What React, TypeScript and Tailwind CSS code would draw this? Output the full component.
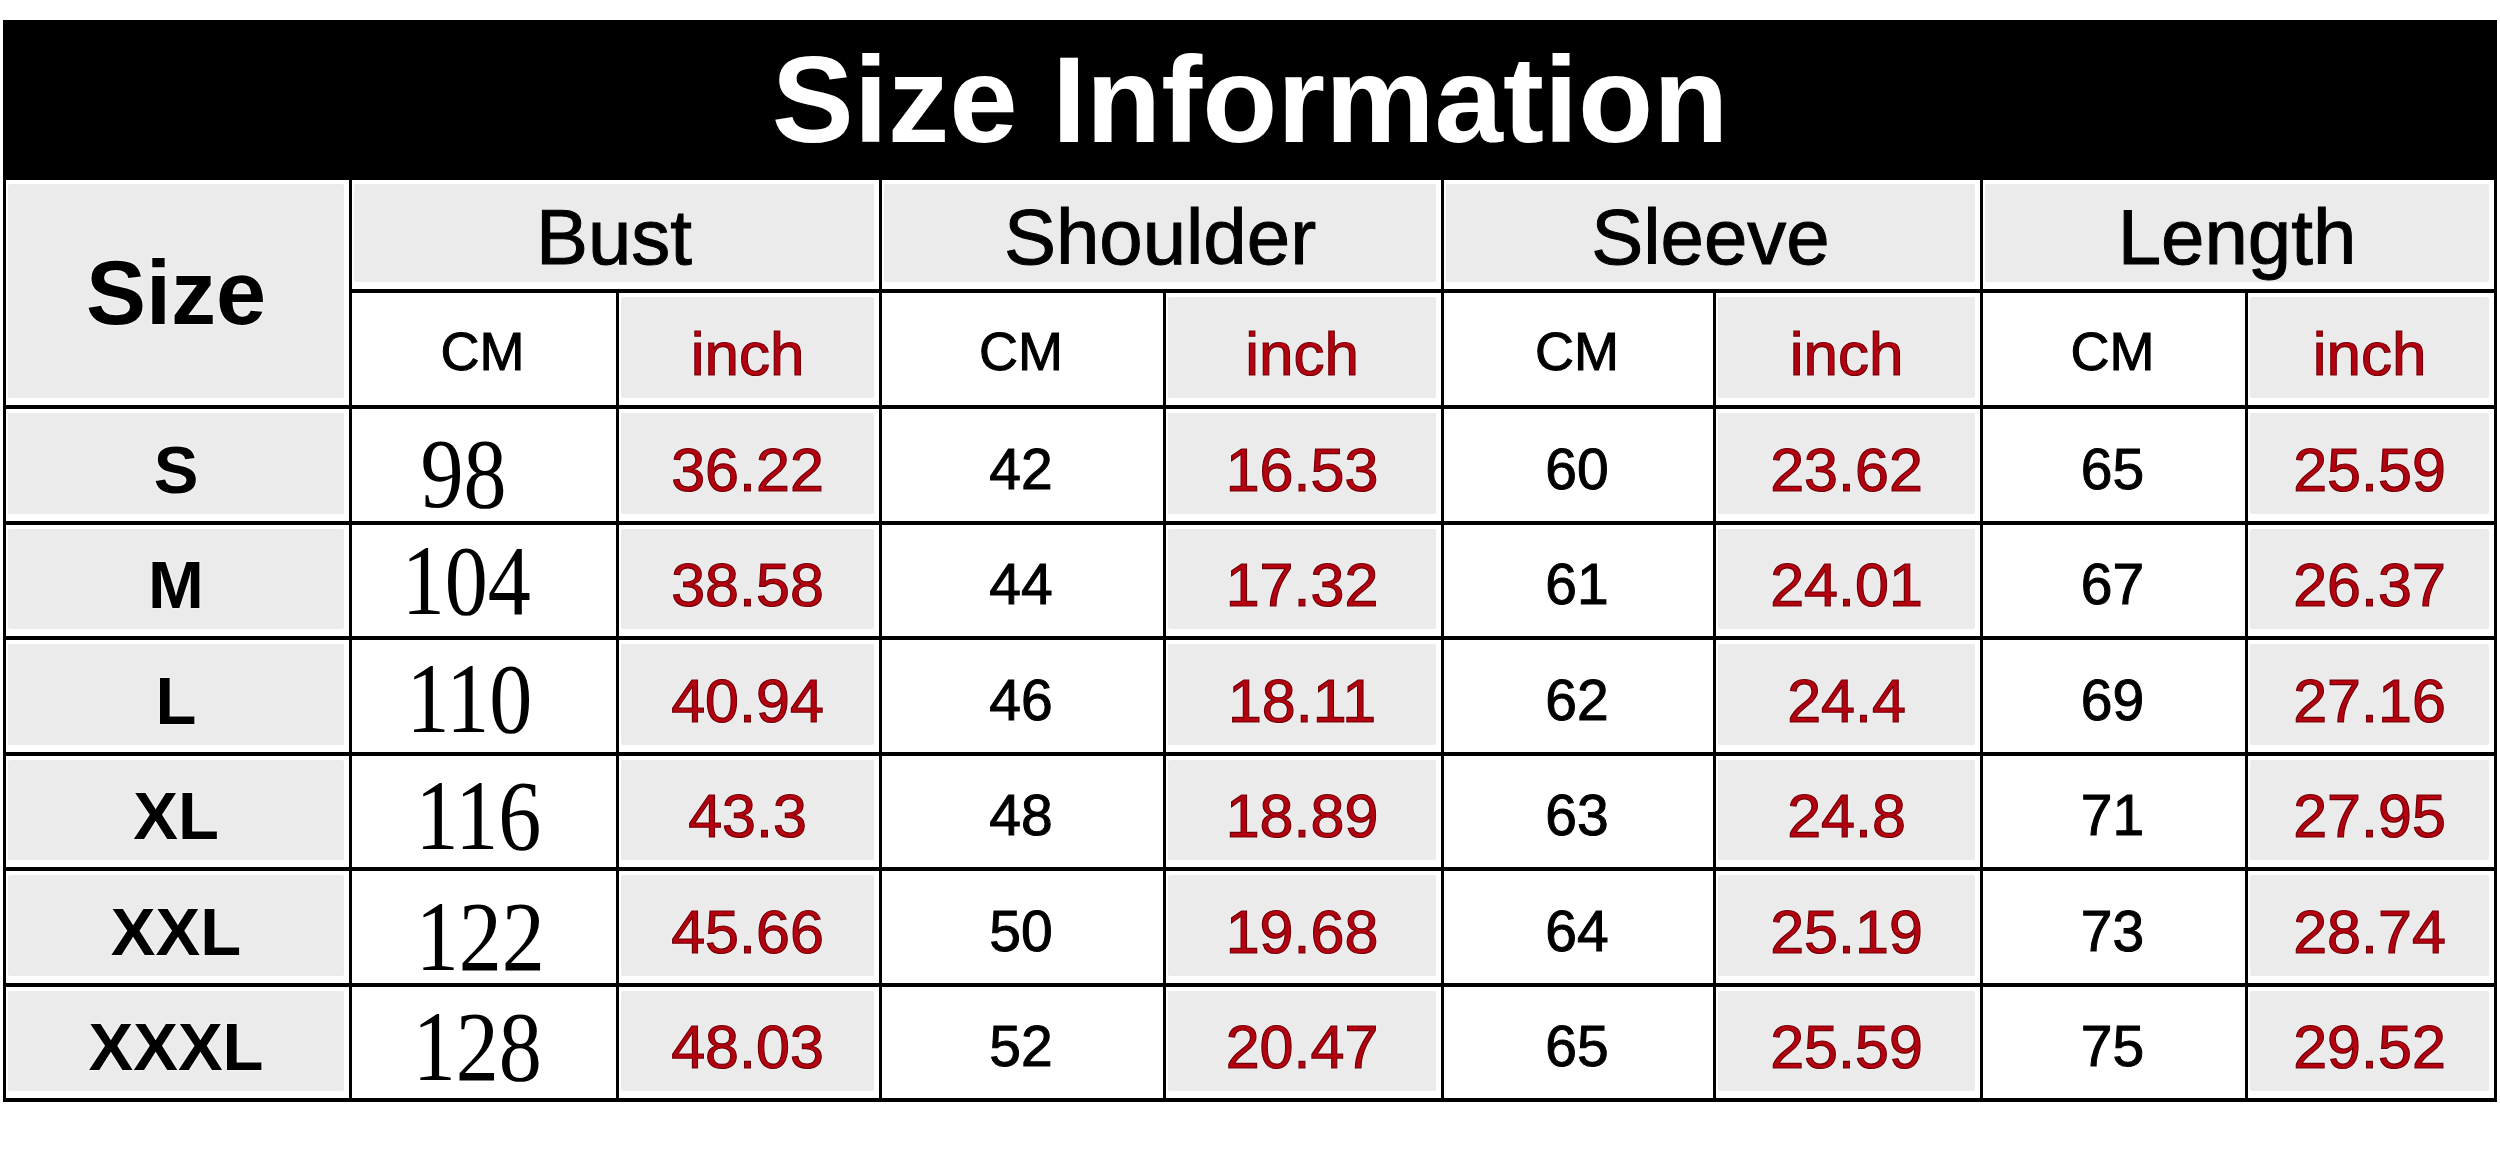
import clsx from "clsx";
import type { ReactNode } from "react";

const sans = "font-['Liberation_Sans',Arial,sans-serif]";
const serif = "font-['Liberation_Serif','Times_New_Roman',serif]";

const groups = ["Bust", "Shoulder", "Sleeve", "Length"];

// bust cm was pasted in a serif face in the original chart, slightly off-centre
const rows = [
  { size: "S", bust: "98", bustPos: "-translate-x-[19px] translate-y-[10px]", values: ["36.22", "42", "16.53", "60", "23.62", "65", "25.59"] },
  { size: "M", bust: "104", bustPos: "-translate-x-[16px] translate-y-[2px]", values: ["38.58", "44", "17.32", "61", "24.01", "67", "26.37"] },
  { size: "L", bust: "110", bustPos: "-translate-x-[13px] translate-y-[4px]", values: ["40.94", "46", "18.11", "62", "24.4", "69", "27.16"] },
  { size: "XL", bust: "116", bustPos: "-translate-x-[4px] translate-y-[6px]", values: ["43.3", "48", "18.89", "63", "24.8", "71", "27.95"] },
  { size: "XXL", bust: "122", bustPos: "-translate-x-[2px] translate-y-[11px]", values: ["45.66", "50", "19.68", "64", "25.19", "73", "28.74"] },
  { size: "XXXL", bust: "128", bustPos: "-translate-x-[5px] translate-y-[6px]", values: ["48.03", "52", "20.47", "65", "25.59", "75", "29.52"] },
];

const Cell = ({
  grey,
  className,
  children,
}: {
  grey?: boolean;
  className?: string;
  children: ReactNode;
}) => (
  <div className={clsx("bg-white pt-[4px] pr-[5px] pb-[7px] pl-[2px]", className)}>
    <div
      className={clsx(
        "flex h-full w-full items-center justify-center rounded-[2px]",
        grey && "bg-[#ebebeb]",
      )}
    >
      {children}
    </div>
  </div>
);

const Red = ({ children, className }: { children: ReactNode; className: string }) => (
  <span
    className={clsx(
      "leading-none text-[#b4000f] [-webkit-text-stroke:1.2px_#6e0008] [text-shadow:0_0_3px_#fff]",
      className,
    )}
  >
    {children}
  </span>
);

export default function App() {
  return (
    <div className={clsx("h-[1162px] w-[2500px] overflow-hidden bg-white", sans)}>
      {/* title band */}
      <div className="mx-[3px] mt-[20px] flex h-[158px] items-center justify-center bg-black">
        <h1 className="text-[123px] font-bold leading-none text-white">Size Information</h1>
      </div>

      <div className="mx-[3px] grid grid-cols-[343px_264px_260px_281px_275px_269px_264px_262px_246px] grid-rows-[109px_112px_repeat(6,111.5px)] gap-x-[3px] gap-y-[4px] bg-black px-[3px] pt-[2px] pb-[4px]">
        <Cell grey className="row-span-2">
          <span className="translate-y-[2px] text-[90px] font-bold leading-none text-black [text-shadow:0_0_3px_#fff]">
            Size
          </span>
        </Cell>
        {groups.map((g) => (
          <Cell grey key={g} className="col-span-2">
            <span className="translate-y-[4px] text-[78px] leading-none text-black [-webkit-text-stroke:1px_#000]">
              {g}
            </span>
          </Cell>
        ))}

        {groups.map((g) => [
          <Cell key={g + "-cm"}>
            <span className="translate-y-[3px] text-[54px] leading-none text-black [-webkit-text-stroke:1px_#000]">
              CM
            </span>
          </Cell>,
          <Cell grey key={g + "-in"}>
            <Red className="translate-y-[6px] text-[62px]">inch</Red>
          </Cell>,
        ])}

        {rows.map((r) => [
          <Cell grey key={r.size}>
            <span className="translate-y-[6px] text-[67px] font-bold leading-none text-black [text-shadow:0_0_3px_#fff]">
              {r.size}
            </span>
          </Cell>,
          <Cell key={r.size + "-bust"}>
            <span
              className={clsx(
                "inline-block scale-x-[0.87] text-[99px] leading-none text-black",
                serif,
                r.bustPos,
              )}
            >
              {r.bust}
            </span>
          </Cell>,
          ...r.values.map((v, i) =>
            i % 2 === 0 ? (
              <Cell grey key={r.size + i}>
                <Red className="translate-y-[7px] text-[61px]">{v}</Red>
              </Cell>
            ) : (
              <Cell key={r.size + i}>
                <span className="translate-y-[6px] text-[57px] leading-none text-black [-webkit-text-stroke:1px_#000]">
                  {v}
                </span>
              </Cell>
            ),
          ),
        ])}
      </div>
    </div>
  );
}
